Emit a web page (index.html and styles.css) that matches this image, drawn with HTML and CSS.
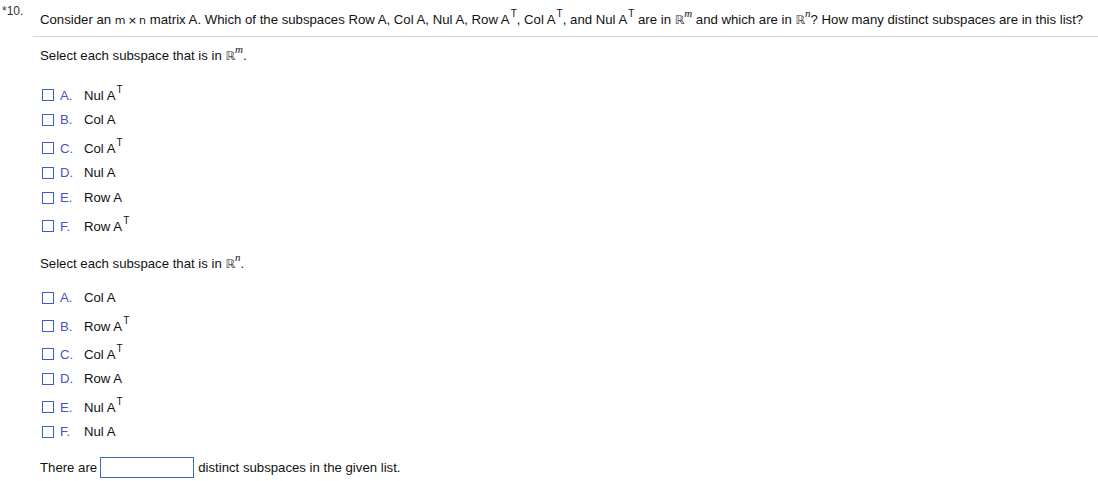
FILE: index.html
```html
<!DOCTYPE html>
<html lang="en">
<head>
    <meta charset="UTF-8">
    <title>Question 10</title>
    <link rel="stylesheet" href="styles.css">
</head>
<body>
    <div class="question">
        <div class="qnum">*10.</div>
        <div class="qbody">
            <div class="stem">
                Consider an <span class="math">m&thinsp;&times;&thinsp;n</span> matrix A. Which of the subspaces Row A, Col A, Nul A, Row A<sup>T</sup>, Col A<sup>T</sup>, and Nul A<sup>T</sup> are in <span class="bb">&#8477;</span><sup class="var">m</sup> and which are in <span class="bb">&#8477;</span><sup class="var">n</sup>? How many distinct subspaces are in this list?
            </div>

            <div class="part">
                <p class="prompt">Select each subspace that is in <span class="bb">&#8477;</span><sup class="var">m</sup>.</p>
                <ul class="choices">
                    <li class="choice tall first"><span class="box"></span><span class="letter">A.</span><span class="label">Nul A<sup>T</sup></span></li>
                    <li class="choice"><span class="box"></span><span class="letter">B.</span><span class="label">Col A</span></li>
                    <li class="choice tall"><span class="box"></span><span class="letter">C.</span><span class="label">Col A<sup>T</sup></span></li>
                    <li class="choice"><span class="box"></span><span class="letter">D.</span><span class="label">Nul A</span></li>
                    <li class="choice"><span class="box"></span><span class="letter">E.</span><span class="label">Row A</span></li>
                    <li class="choice tall"><span class="box"></span><span class="letter">F.</span><span class="label">Row A<sup>T</sup></span></li>
                </ul>
            </div>

            <div class="part">
                <p class="prompt">Select each subspace that is in <span class="bb">&#8477;</span><sup class="var">n</sup>.</p>
                <ul class="choices">
                    <li class="choice first"><span class="box"></span><span class="letter">A.</span><span class="label">Col A</span></li>
                    <li class="choice tall"><span class="box"></span><span class="letter">B.</span><span class="label">Row A<sup>T</sup></span></li>
                    <li class="choice tall"><span class="box"></span><span class="letter">C.</span><span class="label">Col A<sup>T</sup></span></li>
                    <li class="choice"><span class="box"></span><span class="letter">D.</span><span class="label">Row A</span></li>
                    <li class="choice tall"><span class="box"></span><span class="letter">E.</span><span class="label">Nul A<sup>T</sup></span></li>
                    <li class="choice"><span class="box"></span><span class="letter">F.</span><span class="label">Nul A</span></li>
                </ul>
            </div>

            <p class="answer">There are <input type="text" class="blank"> distinct subspaces in the given list.</p>
        </div>
    </div>
</body>
</html>
```

FILE: styles.css
```css
body {
    margin: 0;
    font-family: "Liberation Sans", Arial, sans-serif;
    font-size: 13.2px;
    color: #111;
    background: #fff;
}
.question {
    display: flex;
}
.qnum {
    width: 33px;
    padding: 4px 0 0 2px;
    box-sizing: border-box;
    font-size: 12px;
    color: #333;
}
.qbody {
    flex: 1;
}
.stem {
    padding: 12px 0 7px 7px;
    line-height: 16px;
    border-bottom: 1px solid #cdd3e3;
}
.math {
    font-family: "DejaVu Sans", sans-serif;
    font-size: 11px;
}
.bb {
    font-family: "DejaVu Sans", sans-serif;
    font-size: 12px;
    color: #333;
}
sup {
    font-size: 10px;
    line-height: 0;
    vertical-align: 7px;
    margin-left: 1px;
}
sup.var {
    font-family: "Liberation Serif", serif;
    font-style: italic;
    font-size: 11px;
    margin-left: 0;
}
.part {
    padding-left: 7px;
}
.prompt {
    margin: 11px 0 0;
    line-height: 16px;
}
.choices {
    list-style: none;
    margin: 0;
    padding: 0 0 0 2px;
}
.choice {
    display: flex;
    align-items: center;
    height: 25px;
}
.choice.tall {
    height: 28px;
    padding-top: 4px;
    box-sizing: border-box;
}
.choice.first {
    margin-top: 15px;
}
.box {
    width: 10px;
    height: 10px;
    border: 1.5px solid #3c5cc8;
    background: #fff;
}
.letter {
    margin-left: 6px;
    width: 24px;
    color: #4a52c0;
}
.label {
    color: #111;
}
.part + .part .prompt {
    margin-top: 18px;
}
.part + .part .choice.first {
    margin-top: 13px;
}
.answer {
    margin: 13px 0 0 7px;
    display: flex;
    align-items: center;
}
.blank {
    width: 94px;
    height: 21px;
    box-sizing: border-box;
    margin: 0 4px 0 3px;
    border: 1px solid #3a6ad0;
    padding: 0;
    font: inherit;
}
```
